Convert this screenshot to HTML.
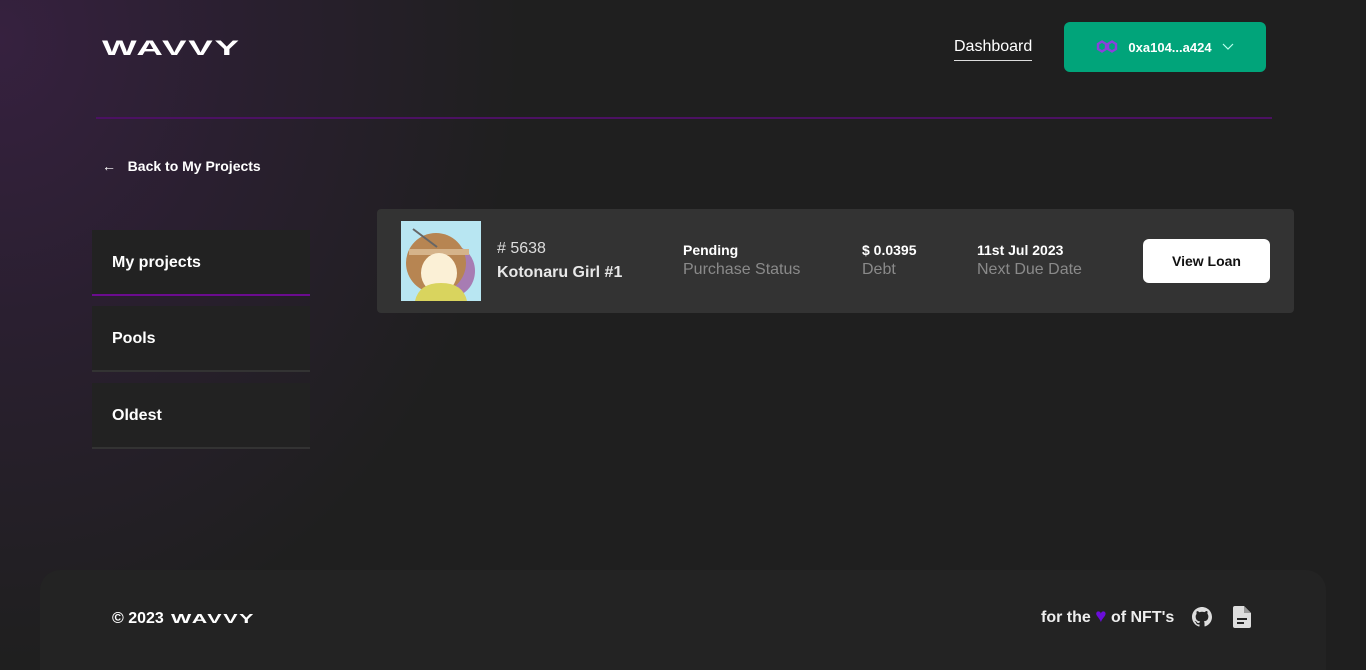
<!DOCTYPE html>
<html style="height:670px;overflow:hidden"><head><meta charset="utf-8"><style>
*{margin:0;padding:0;box-sizing:border-box}
body{width:1366px;height:670px;overflow:hidden;font-family:"Liberation Sans",Arial,sans-serif;color:#fff;
background:radial-gradient(ellipse 520px 620px at 0px 40px,#36213f 0%,#2a1f30 45%,#1f1f1f 100%) ,#1f1f1f;position:relative}
.abs{position:absolute}
.logo{font-weight:900;font-size:21px;letter-spacing:1px;transform:scaleX(1.75);transform-origin:left top;line-height:1}
.nav{left:954px;top:38px;font-size:16px;padding-bottom:4px;border-bottom:1px solid #ddd}
.wallet{left:1064px;top:22px;width:202px;height:50px;background:#01a47a;border-radius:6px;display:flex;align-items:center;justify-content:center;font-weight:bold;font-size:13px;gap:10px}
.hr{left:96px;top:117px;width:1176px;height:2px;background:#4b1162}
.back{left:102px;top:158px;font-size:14px;font-weight:bold}
.side{left:92px;width:218px;height:66px;background:#222;font-weight:bold;font-size:16px;padding:24px 20px 0;border-bottom:2px solid #333}
.card{left:377px;top:209px;width:917px;height:104px;background:#333;border-radius:4px}
.lbl{font-size:14px;font-weight:bold}
.sub{font-size:16px;color:#8a8a8a;margin-top:3px}
.btn{left:1143px;top:239px;width:127px;height:44px;background:#fff;color:#111;border-radius:6px;font-size:14px;font-weight:bold;display:flex;align-items:center;justify-content:center}
.foot{left:40px;top:570px;width:1286px;height:100px;background:#232323;border-radius:20px 20px 0 0}
</style></head><body>
<div class="abs logo" style="left:102px;top:38px">WAVVY</div>
<div class="abs nav">Dashboard</div>
<div class="abs wallet"><svg width="22" height="18" viewBox="0 0 22 18"><path d="M2 6l4-2.5 4 2.5v5l-4 2.5-4-2.5z M12 6l4-2.5 4 2.5v5l-4 2.5-4-2.5z" fill="none" stroke="#8b3fdc" stroke-width="2.4"/></svg><span>0xa104...a424</span><svg width="12" height="8" viewBox="0 0 12 8"><path d="M1 1l5 5 5-5" fill="none" stroke="#bfe" stroke-width="1.2"/></svg></div>
<div class="abs hr"></div>
<div class="abs back">←&nbsp;&nbsp;&nbsp;Back to My Projects</div>
<div class="abs side" style="top:230px;border-bottom:2px solid #6b0c8f">My projects</div>
<div class="abs side" style="top:306px">Pools</div>
<div class="abs side" style="top:383px">Oldest</div>
<div class="abs card"></div>
<svg class="abs" style="left:401px;top:221px" width="80" height="80" viewBox="0 0 80 80">
<rect width="80" height="80" fill="#b8e6f2"/>
<ellipse cx="50" cy="50" rx="24" ry="26" fill="#a77cb3"/>
<ellipse cx="35" cy="42" rx="30" ry="30" fill="#b78552"/>
<rect x="8" y="28" width="60" height="6" fill="#d5b38a"/>
<ellipse cx="38" cy="52" rx="18" ry="20" fill="#fbf0d6"/>
<path d="M14 80q4-18 26-18t26 18z" fill="#d9d45e"/>
<line x1="12" y1="8" x2="36" y2="26" stroke="#666" stroke-width="2"/>
</svg>
<div class="abs" style="left:497px;top:240px;font-size:16px;color:#ddd"># 5638</div>
<div class="abs" style="left:497px;top:264px;font-size:16px;font-weight:bold;color:#e8e8e8">Kotonaru Girl #1</div>
<div class="abs" style="left:683px;top:242px"><div class="lbl">Pending</div><div class="sub">Purchase Status</div></div>
<div class="abs" style="left:862px;top:242px"><div class="lbl">$ 0.0395</div><div class="sub">Debt</div></div>
<div class="abs" style="left:977px;top:242px"><div class="lbl">11st Jul 2023</div><div class="sub">Next Due Date</div></div>
<div class="abs btn">View Loan</div>
<div class="abs foot"></div>
<div class="abs" style="left:112px;top:610px;font-size:16px;font-weight:bold">© 2023</div>
<div class="abs" style="left:171px;top:612px;font-size:13px;font-weight:900;letter-spacing:1px;transform:scaleX(1.65);transform-origin:left top;line-height:1">WAVVY</div>
<div class="abs" style="left:1041px;top:609px;font-size:16px;font-weight:bold;color:#eee">for the <span style="color:#6a0dd9;font-size:19px;line-height:16px">♥</span> of NFT's</div>
<svg class="abs" style="left:1192px;top:607px" width="20" height="20" viewBox="0 0 16 16"><path fill="#ddd" d="M8 0C3.58 0 0 3.58 0 8c0 3.54 2.29 6.53 5.47 7.59.4.07.55-.17.55-.38v-1.33c-2.23.48-2.7-1.07-2.7-1.07-.36-.93-.89-1.17-.89-1.17-.73-.5.06-.49.06-.49.8.06 1.23.83 1.23.83.71 1.22 1.87.87 2.33.66.07-.52.28-.87.51-1.07-1.78-.2-3.64-.89-3.64-3.95 0-.87.31-1.59.82-2.15-.08-.2-.36-1.02.08-2.12 0 0 .67-.21 2.2.82A7.6 7.6 0 0 1 8 3.8c.68 0 1.36.09 2 .27 1.53-1.04 2.2-.82 2.2-.82.44 1.1.16 1.92.08 2.12.51.56.82 1.27.82 2.15 0 3.07-1.87 3.75-3.65 3.95.29.25.54.73.54 1.48v2.2c0 .21.15.46.55.38A8 8 0 0 0 16 8c0-4.42-3.58-8-8-8z"/></svg>
<svg class="abs" style="left:1233px;top:606px" width="18" height="22" viewBox="0 0 18 22"><path d="M2 0h9l7 7v13a2 2 0 0 1-2 2H2a2 2 0 0 1-2-2V2a2 2 0 0 1 2-2z" fill="#ddd"/><path d="M11 0v7h7z" fill="#999"/><rect x="4" y="12" width="10" height="2" fill="#232323"/><rect x="4" y="16" width="7" height="2" fill="#232323"/></svg>
</body></html>
